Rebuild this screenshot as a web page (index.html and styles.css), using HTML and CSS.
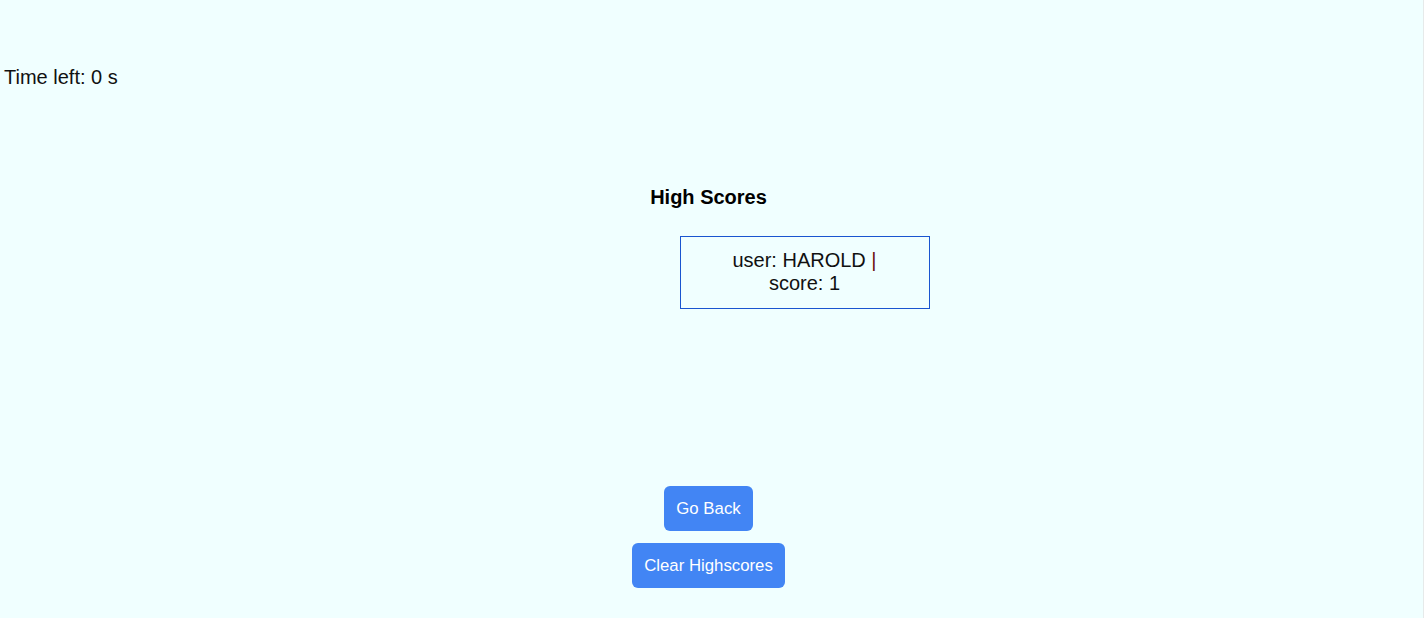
FILE: index.html
```html
<!DOCTYPE html>
<html lang="en">
<head>
  <meta charset="UTF-8" />
  <meta name="viewport" content="width=device-width, initial-scale=1.0" />
  <title>Code Quiz - High Scores</title>
  <link rel="stylesheet" href="styles.css">
</head>
<body>

  <header>
    <p class="timer">Time left: <span id="time">0</span> s</p>
  </header>

  <main>
    <h2>High Scores</h2>
    <ul class="scores">
      <li>user: HAROLD <span class="sep">|</span> score: 1</li>
    </ul>

    <div class="actions">
      <button type="button" id="goBack">Go Back</button>
      <button type="button" id="clearScores">Clear Highscores</button>
    </div>
  </main>

</body>
</html>
```

FILE: styles.css
```css
body {
  font-family: 'Liberation Sans', Arial, sans-serif;
  background: #f0ffff;
  color: #111;
  margin: 0;
  padding: 0;
  border-right: 1px solid #e6eaea;
  min-height: 618px;
  box-sizing: border-box;
}
header {
  padding: 66px 4px 0;
}
.timer {
  margin: 0;
  font-size: 20px;
  line-height: 23px;
}
main {
  display: flex;
  flex-direction: column;
  align-items: center;
  padding-right: 6px;
}
main h2 {
  margin: 97px 0 0;
  font-size: 20px;
  line-height: 23px;
  color: #000;
}
.scores {
  list-style: none;
  margin: 27px 0 0 192px;
  padding: 0;
}
.scores li {
  width: 250px;
  box-sizing: border-box;
  border: 1px solid #1a55d0;
  padding: 12px 24px 13px;
  text-align: center;
  font-size: 20px;
  line-height: 23px;
}
.sep {
  color: #6b1010;
}
.actions {
  display: flex;
  flex-direction: column;
  align-items: center;
  gap: 12px;
  margin-top: 177px;
}
button {
  padding: 12px;
  font-family: 'Liberation Sans', Arial, sans-serif;
  font-size: 16.8px;
  line-height: 21px;
  background-color: #4285f4;
  color: white;
  border: none;
  border-radius: 6px;
  cursor: pointer;
}
```
